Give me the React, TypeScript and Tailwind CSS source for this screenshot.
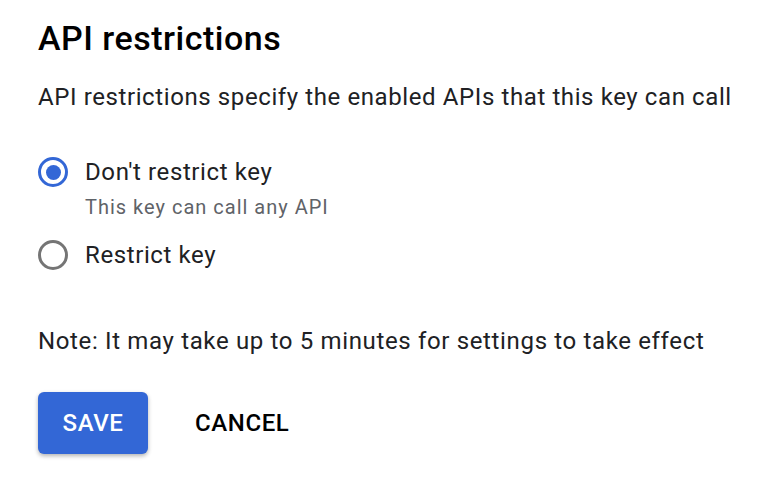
import React, { useState } from 'react';

type Option = {
  id: string;
  label: string;
  hint?: string;
};

const options: Option[] = [
  { id: 'none', label: "Don't restrict key", hint: 'This key can call any API' },
  { id: 'restrict', label: 'Restrict key' },
];

const Radio: React.FC<{ checked: boolean }> = ({ checked }) => (
  <span
    className={`flex h-[30px] w-[30px] shrink-0 items-center justify-center rounded-full border-[3px] ${
      checked ? 'border-[#3367d6]' : 'border-[#757575]'
    }`}
  >
    {checked && <span className="h-[15px] w-[15px] rounded-full bg-[#3367d6]" />}
  </span>
);

const App: React.FC = () => {
  const [selected, setSelected] = useState('none');

  return (
    <div className="min-h-[500px] bg-white px-[38px] pt-[18px] font-['Roboto',sans-serif] tracking-[0.6px] whitespace-nowrap text-[#202124]">
      <h2 className="text-[34px] font-medium leading-[40px] tracking-[0.5px] text-black">API restrictions</h2>
      <p className="mt-[23px] text-[24px] leading-[32px]">
        API restrictions specify the enabled APIs that this key can call
      </p>

      <div className="mt-[43px] flex flex-col gap-[18px]">
        {options.map((opt) => (
          <label
            key={opt.id}
            className="flex cursor-pointer items-start gap-[17px]"
            onClick={() => setSelected(opt.id)}
          >
            <span className="pt-[1px]">
              <Radio checked={selected === opt.id} />
            </span>
            <span className="flex flex-col">
              <span className="text-[24px] leading-[32px]">{opt.label}</span>
              {opt.hint && (
                <span className="mt-[5px] text-[20px] leading-[28px] tracking-[1px] text-[#5f6368]">{opt.hint}</span>
              )}
            </span>
          </label>
        ))}
      </div>

      <p className="mt-[54px] text-[24px] leading-[32px] tracking-[0.65px]">
        Note: It may take up to 5 minutes for settings to take effect
      </p>

      <div className="mt-[35px] flex items-center gap-[24px]">
        <button className="h-[62px] w-[110px] rounded-[6px] bg-[#3367d6] text-[24px] font-medium uppercase text-white shadow-[0_2px_4px_rgba(0,0,0,0.3)]">
          Save
        </button>
        <button className="h-[62px] px-[23px] text-[24px] font-medium uppercase text-black">
          Cancel
        </button>
      </div>
    </div>
  );
};

export default App;
